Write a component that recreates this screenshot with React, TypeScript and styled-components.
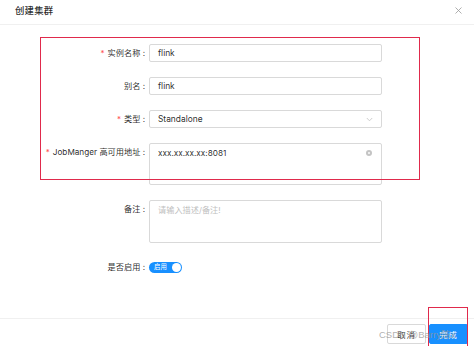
import React from "react";
import styled, { createGlobalStyle } from "styled-components";

const Global = createGlobalStyle`
  html, body { margin: 0; padding: 0; background: #fff; }
  body { font-family: "Inter", "Noto Sans CJK SC", sans-serif; }
  * { box-sizing: border-box; }
`;

const Modal = styled.div`
  position: relative;
  width: 474px;
  height: 346px;
  display: flex;
  flex-direction: column;
  background: #fff;
  overflow: hidden;
`;

const Header = styled.div`
  height: 25px;
  flex: none;
  display: flex;
  align-items: center;
  justify-content: space-between;
  padding: 0 9px 4px 15px;
  border-bottom: 1px solid #f0f0f0;
`;

const Title = styled.div`
  font-size: 9.4px;
  font-weight: 500;
  color: rgba(0, 0, 0, 0.85);
  letter-spacing: 0.2px;
`;

const Close = styled.div`
  width: 10px;
  height: 10px;
  display: flex;
  align-items: center;
  justify-content: center;
  margin-right: 2px;
`;

const Body = styled.div`
  flex: 1;
  padding: 19px 0 0 0;
  display: flex;
  flex-direction: column;
  gap: 15px;
`;

const Row = styled.div<{ $top?: boolean }>`
  display: grid;
  grid-template-columns: 145px 233px;
  column-gap: 4px;
  align-items: ${(p) => (p.$top ? "start" : "center")};
`;

const Label = styled.label`
  text-align: right;
  font-size: 8.2px;
  color: rgba(0, 0, 0, 0.85);
  white-space: nowrap;
  line-height: 18px;
`;

const Star = styled.span`
  color: #ff4d4f;
  margin-right: 3px;
  font-size: 8px;
`;

const Input = styled.div`
  height: 18px;
  border: 1px solid #d9d9d9;
  border-radius: 2px;
  padding: 0 8px;
  display: flex;
  align-items: center;
  justify-content: space-between;
  font-size: 8.4px;
  color: rgba(0, 0, 0, 0.85);
`;

const TextArea = styled.div<{ $h: number }>`
  position: relative;
  height: ${(p) => p.$h}px;
  border: 1px solid #d9d9d9;
  border-radius: 2px;
  padding: 4px 8px;
  font-size: 8.2px;
  line-height: 11px;
  color: rgba(0, 0, 0, 0.85);
  display: flex;
  justify-content: space-between;
  align-items: flex-start;
`;

const Placeholder = styled.span`
  color: #bfbfbf;
`;

const ClearIcon = styled.span`
  width: 6px;
  height: 6px;
  border-radius: 50%;
  background: #c4c4c4;
  margin-top: 2px;
  margin-right: 1px;
  display: flex;
  align-items: center;
  justify-content: center;
`;

const Switch = styled.div`
  width: 33px;
  height: 11px;
  border-radius: 6px;
  background: #1890ff;
  display: flex;
  align-items: center;
  justify-content: space-between;
  padding: 0 1px 0 5px;
`;

const SwitchText = styled.span`
  color: #fff;
  font-size: 6.4px;
  line-height: 11px;
`;

const Knob = styled.span`
  width: 9px;
  height: 9px;
  border-radius: 50%;
  background: #fff;
`;

const Footer = styled.div`
  height: 28px;
  flex: none;
  border-top: 1px solid #f0f0f0;
  display: flex;
  justify-content: flex-end;
  align-items: flex-start;
  gap: 3px;
  padding: 5px 6px 0 0;
`;

const Button = styled.div<{ $primary?: boolean }>`
  width: 39px;
  height: 20px;
  border-radius: 2px;
  border: 1px solid ${(p) => (p.$primary ? "#1890ff" : "#d9d9d9")};
  background: ${(p) => (p.$primary ? "#1890ff" : "#fff")};
  color: ${(p) => (p.$primary ? "#fff" : "rgba(0,0,0,0.85)")};
  font-size: 8.3px;
  display: flex;
  align-items: center;
  justify-content: center;
  letter-spacing: 1px;
`;

const Mark = styled.div<{ $l: number; $t: number; $w: number; $h: number }>`
  position: absolute;
  left: ${(p) => p.$l}px;
  top: ${(p) => p.$t}px;
  width: ${(p) => p.$w}px;
  height: ${(p) => p.$h}px;
  border: 1.5px solid #e02a4c;
  pointer-events: none;
`;

const Watermark = styled.div`
  position: absolute;
  left: 379px;
  top: 329px;
  font-size: 9.5px;
  color: rgba(150, 150, 150, 0.75);
  white-space: nowrap;
  font-family: "Liberation Sans", sans-serif;
  pointer-events: none;
`;

const Chevron = () => (
  <svg width="7" height="5" viewBox="0 0 7 5">
    <path d="M0.8 1 L3.5 3.8 L6.2 1" fill="none" stroke="#c8c8c8" strokeWidth="0.9" />
  </svg>
);

export default function App() {
  return (
    <>
      <Global />
      <Modal>
        <Header>
          <Title>创建集群</Title>
          <Close>
            <svg width="7" height="7" viewBox="0 0 7 7">
              <path d="M0.5 0.5 L6.5 6.5 M6.5 0.5 L0.5 6.5" stroke="#9a9a9a" strokeWidth="0.8" />
            </svg>
          </Close>
        </Header>
        <Body>
          <Row>
            <Label><Star>*</Star>实例名称 :</Label>
            <Input>flink</Input>
          </Row>
          <Row>
            <Label>别名 :</Label>
            <Input>flink</Input>
          </Row>
          <Row>
            <Label><Star>*</Star>类型 :</Label>
            <Input>
              Standalone
              <Chevron />
            </Input>
          </Row>
          <Row $top>
            <Label><Star>*</Star>JobManger 高可用地址 :</Label>
            <TextArea $h={42}>
              xxx.xx.xx.xx:8081
              <ClearIcon>
                <svg width="4" height="4" viewBox="0 0 4 4">
                  <path d="M1 1 L3 3 M3 1 L1 3" stroke="#fff" strokeWidth="0.7" />
                </svg>
              </ClearIcon>
            </TextArea>
          </Row>
          <Row $top>
            <Label>备注 :</Label>
            <TextArea $h={43}>
              <Placeholder>请输入描述/备注!</Placeholder>
            </TextArea>
          </Row>
          <Row>
            <Label>是否启用 :</Label>
            <Switch>
              <SwitchText>启用</SwitchText>
              <Knob />
            </Switch>
          </Row>
        </Body>
        <Footer>
          <Button>取消</Button>
          <Button $primary>完成</Button>
        </Footer>
        <Mark $l={40} $t={37} $w={380} $h={143} />
        <Mark $l={428} $t={307} $w={40} $h={45} />
        <Watermark>CSDN @Barry陈x</Watermark>
      </Modal>
    </>
  );
}
